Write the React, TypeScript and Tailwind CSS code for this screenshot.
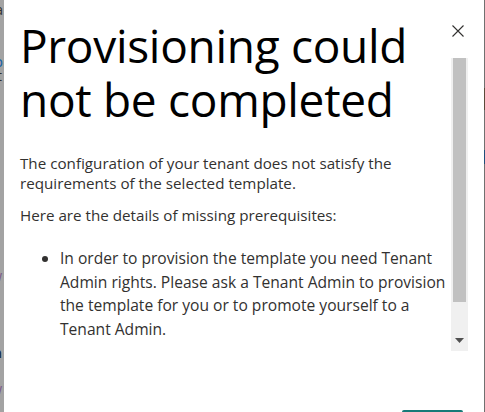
import React from 'react';

const font = { fontFamily: '"Open Sans", "Noto Sans", sans-serif' };

function BackdropEdge() {
  // slivers of the page underneath, clipped by the dialog
  return (
    <div className="w-[4px] shrink-0 overflow-hidden text-[14px] leading-[14px] text-[#323130]">
      <div className="w-[40px] -ml-[37px] text-right mt-[3px]">da</div>
      <div className="w-[40px] -ml-[37px] text-right mt-[38px] text-[#0f5ea8]">to</div>
      <div className="w-[40px] -ml-[38px] text-right">st</div>
      <div className="w-[40px] -ml-[38px] text-right mt-[186px] text-[#7a5a8a]">w</div>
      <div className="w-[40px] -ml-[38px] text-right mt-[63px] font-bold text-[#1b2a3a]">n</div>
      <div className="w-[40px] -ml-[38px] text-right mt-[22px] text-[#7a5a8a]">w</div>
    </div>
  );
}

function CloseIcon() {
  return (
    <svg width="12" height="12" viewBox="0 0 12 12" fill="none" stroke="#323130" strokeWidth="1.1">
      <path d="M0.5 0.5 L11.5 11.5 M11.5 0.5 L0.5 11.5" />
    </svg>
  );
}

function Scrollbar() {
  return (
    <div className="w-[17px] h-[293px] bg-[#f0f0f0] flex flex-col">
      <div className="mx-[2px] h-[244px] bg-[#c1c1c1]" />
      <div className="flex-1 flex items-end justify-center pb-[8px]">
        <svg width="9" height="5" viewBox="0 0 9 5">
          <path d="M0 0 H9 L4.5 5 Z" fill="#505050" />
        </svg>
      </div>
    </div>
  );
}

export default function App() {
  return (
    <div className="w-[485px] h-[412px] flex overflow-hidden bg-[#a3a3a3]" style={font}>
      <BackdropEdge />

      <div className="w-[480px] shrink-0 bg-white flex">
        <div className="flex-1 min-w-0 overflow-hidden pl-4 pr-2 pt-[18px] text-[#201f1e] whitespace-nowrap">
          <h1 className="text-[46px] leading-[54px] font-normal text-black tracking-[-0.3px]">
            Provisioning could
            <br />
            not be completed
          </h1>

          <div className="mt-[27px] text-[15.2px] leading-[20px] text-[#323130]">
            <p>
              The configuration of your tenant does not satisfy the
              <br />
              requirements of the selected template.
            </p>
            <p className="mt-[12px]">Here are the details of missing prerequisites:</p>
            <ul className="mt-[22px] pl-[40px] list-disc text-[15.6px] leading-[23.5px]">
              <li>
                In order to provision the template you need Tenant
                <br />
                Admin rights. Please ask a Tenant Admin to provision
                <br />
                the template for you or to promote yourself to a
                <br />
                Tenant Admin.
              </li>
            </ul>
          </div>
        </div>

        <div className="w-[33px] shrink-0 flex flex-col">
          <button className="w-[17px] h-[58px] flex items-center justify-center pt-[4px] pr-[3px]">
            <CloseIcon />
          </button>
          <Scrollbar />
          <div className="flex-1 flex items-end">
            <div className="-ml-[49px] w-[61px] h-[2px] rounded-t-[2px] bg-[#167a78]" />
          </div>
        </div>
      </div>

      <div className="w-[1px] shrink-0 bg-[#707070] flex flex-col">
        <div className="h-[88px]" />
        <div className="h-[22px] bg-[#5a4a3a]" />
        <div className="h-[40px]" />
        <div className="h-[14px] bg-[#1f4f7a]" />
      </div>
    </div>
  );
}
